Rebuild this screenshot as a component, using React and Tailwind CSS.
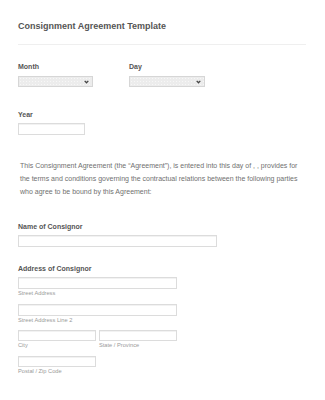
function Chevron() {
  return (
    <svg width="5" height="4" viewBox="0 0 5 4" className="block">
      <path d="M0.7 0.9 L2.5 2.8 L4.3 0.9" fill="none" stroke="#444" strokeWidth="1.3" />
    </svg>
  );
}

function Select({ width }) {
  return (
    <div
      className={`h-[11px] ${width} border border-[#d6d6d6] bg-[#ececec] flex items-center justify-end pr-[3px]`}
      style={{
        backgroundImage:
          "radial-gradient(circle, #f7f7f7 0.5px, transparent 0.6px)",
        backgroundSize: "3px 3px",
      }}
    >
      <Chevron />
    </div>
  );
}

function Input({ width, height = "h-[11px]" }) {
  return (
    <div
      className={`${height} ${width} border border-[#dcdcdc] bg-white shadow-[inset_0_1px_0_#f2f2f2]`}
    />
  );
}

function Label({ children, className = "" }) {
  return (
    <div className={`text-[7px] leading-[10px] font-bold text-[#555] ${className}`}>
      {children}
    </div>
  );
}

function SubLabel({ children }) {
  return <div className="text-[5.7px] leading-[9px] text-[#9a9a9a]">{children}</div>;
}

export default function App() {
  return (
    <div
      className="w-[325px] h-[400px] bg-white pl-[18px] overflow-hidden antialiased"
      style={{ fontFamily: '"Liberation Sans", Arial, sans-serif' }}
    >
      <div className="pt-[20px] text-[9px] leading-[12px] font-bold text-[#555]">
        Consignment Agreement Template
      </div>
      <div className="mt-[12px] h-px w-[288px] bg-[#efefef]" />

      <div className="mt-[17px] flex">
        <div className="w-[111px]">
          <Label className="mb-[4px]">Month</Label>
          <Select width="w-[75px]" />
        </div>
        <div>
          <Label className="mb-[4px]">Day</Label>
          <Select width="w-[76px]" />
        </div>
      </div>

      <Label className="mt-[23px] mb-[3px]">Year</Label>
      <Input width="w-[67px]" height="h-[12px]" />

      <p className="mt-[24px] pl-[2px] w-[290px] text-[7px] leading-[13px] text-[#707070]">
        This Consignment Agreement (the “Agreement”), is entered into this day of , , provides for
        the terms and conditions governing the contractual relations between the following parties
        who agree to be bound by this Agreement:
      </p>

      <Label className="mt-[24px] mb-[3px]">Name of Consignor</Label>
      <Input width="w-[199px]" height="h-[12px]" />

      <Label className="mt-[17px] mb-[3px]">Address of Consignor</Label>
      <Input width="w-[159px]" height="h-[12px]" />
      <SubLabel>Street Address</SubLabel>
      <div className="mt-[6px]">
        <Input width="w-[159px]" height="h-[12px]" />
      </div>
      <SubLabel>Street Address Line 2</SubLabel>
      <div className="mt-[5px] flex gap-[3px]">
        <div>
          <Input width="w-[78px]" />
          <SubLabel>City</SubLabel>
        </div>
        <div>
          <Input width="w-[78px]" />
          <SubLabel>State / Province</SubLabel>
        </div>
      </div>
      <div className="mt-[6px]">
        <Input width="w-[78px]" />
        <SubLabel>Postal / Zip Code</SubLabel>
      </div>
    </div>
  );
}
